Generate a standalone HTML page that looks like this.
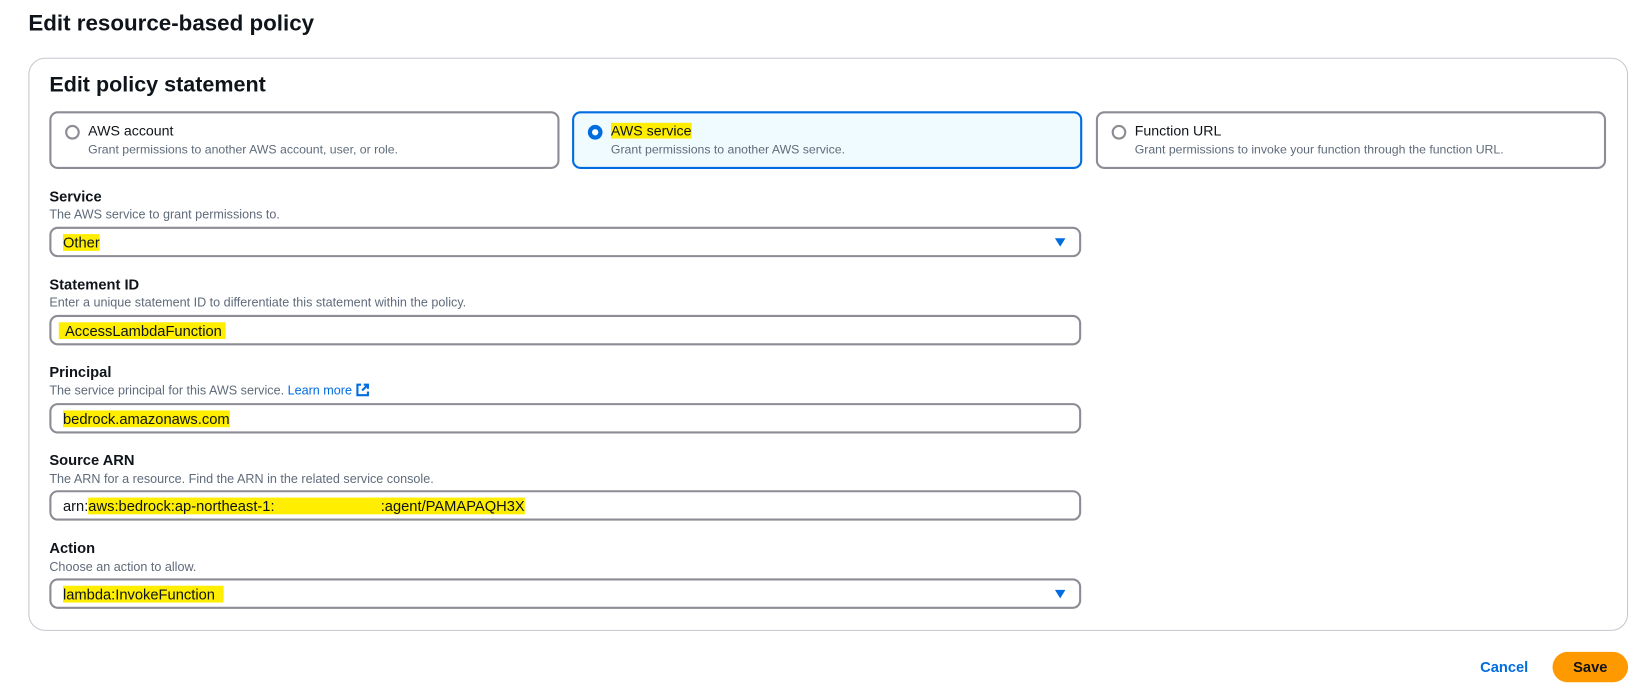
<!DOCTYPE html>
<html><head><meta charset="utf-8"><style>
*{box-sizing:border-box;margin:0;padding:0}
body{width:1646px;height:693px;background:#fff;font-family:"Liberation Sans",sans-serif;color:#16191f;overflow:hidden}
#w{position:relative;width:1568px;height:660px;transform:scale(1.0497);transform-origin:0 0}
.abs{position:absolute}
h1{position:absolute;left:27px;top:10px;font-size:21.3px;font-weight:bold;color:#0f141a}
.card{position:absolute;left:27px;top:55px;width:1524px;height:546px;border:1px solid #c6c6cd;border-radius:16px}
h2{position:absolute;left:47px;top:69px;font-size:20.5px;font-weight:bold;color:#0f141a}
.tile{position:absolute;top:106px;height:55px;width:486px;border:2px solid #8c8c94;border-radius:8px;background:#fff}
.tile.sel{border-color:#006ce0;background:#f0fbff}
.radio{position:absolute;left:13px;top:11px;width:14px;height:14px;border:2px solid #8c8c94;border-radius:50%;background:#fff}
.tile.sel .radio{border:4px solid #006ce0}
.tt{position:absolute;left:35px;top:9px;font-size:13.5px;color:#0f141a}
.td{position:absolute;left:35px;top:28px;font-size:11.7px;color:#5f6b7a}
.lbl{position:absolute;left:47px;font-size:14px;font-weight:bold;color:#0f141a}
.desc{position:absolute;left:47px;font-size:12px;color:#5f6b7a}
.inp{position:absolute;left:47px;width:983px;height:29px;border:2px solid #8c8c94;border-radius:8px;background:#fff}
.val{position:absolute;left:11px;top:5px;font-size:14px;color:#0f141a}
.hl{background:#ffee00}
.arr{position:absolute;right:13px;top:9px;width:0;height:0;border-left:5px solid transparent;border-right:5px solid transparent;border-top:8px solid #006ce0}
a{color:#006ce0;text-decoration:none}
</style></head><body><div id="w">
<h1>Edit resource-based policy</h1>
<div class="card"></div>
<h2>Edit policy statement</h2>
<div class="tile" style="left:47px"><div class="radio"></div><div class="tt">AWS account</div><div class="td">Grant permissions to another AWS account, user, or role.</div></div>
<div class="tile sel" style="left:545px"><div class="radio"></div><div class="tt"><span class="hl">AWS service</span></div><div class="td">Grant permissions to another AWS service.</div></div>
<div class="tile" style="left:1044px"><div class="radio"></div><div class="tt">Function URL</div><div class="td">Grant permissions to invoke your function through the function URL.</div></div>

<div class="lbl" style="top:179px">Service</div>
<div class="desc" style="top:197px">The AWS service to grant permissions to.</div>
<div class="inp" style="top:216px"><div class="val"><span class="hl">Other</span></div><div class="arr"></div></div>

<div class="lbl" style="top:263px">Statement ID</div>
<div class="desc" style="top:281px">Enter a unique statement ID to differentiate this statement within the policy.</div>
<div class="inp" style="top:300px"><div class="val"><span class="hl" style="padding:0 4px 0 2px;margin-left:-4px">&nbsp;AccessLambdaFunction</span></div></div>

<div class="lbl" style="top:346px">Principal</div>
<div class="desc" style="top:365px">The service principal for this AWS service. <a>Learn more</a> <svg width="13" height="13" viewBox="0 0 13 13" style="vertical-align:-2px"><path d="M5 1.5H1.5v10h10V8" fill="none" stroke="#006ce0" stroke-width="2"/><path d="M7.5 1.5h4v4M11.5 1.5L6 7" fill="none" stroke="#006ce0" stroke-width="2"/></svg></div>
<div class="inp" style="top:384px"><div class="val"><span class="hl">bedrock.amazonaws.com</span></div></div>

<div class="lbl" style="top:430px">Source ARN</div>
<div class="desc" style="top:449px">The ARN for a resource. Find the ARN in the related service console.</div>
<div class="inp" style="top:467px"><div class="val">arn:<span class="hl">aws:bedrock:ap-northeast-1:&nbsp;&nbsp;&nbsp;&nbsp;&nbsp;&nbsp;&nbsp;&nbsp;&nbsp;&nbsp;&nbsp;&nbsp;&nbsp;&nbsp;&nbsp;&nbsp;&nbsp;&nbsp;&nbsp;&nbsp;&nbsp;&nbsp;&nbsp;&nbsp;&nbsp;&nbsp;:agent/PAMAPAQH3X</span></div></div>

<div class="lbl" style="top:514px">Action</div>
<div class="desc" style="top:533px">Choose an action to allow.</div>
<div class="inp" style="top:551px"><div class="val"><span class="hl">lambda:InvokeFunction&nbsp;&nbsp;</span></div><div class="arr"></div></div>

<div class="abs" style="left:1410px;top:627px;font-size:14px;font-weight:bold;color:#006ce0">Cancel</div>
<div class="abs" style="left:1479px;top:621px;width:72px;height:29px;border-radius:15px;background:#ff9900;font-size:14px;font-weight:bold;color:#0f141a;text-align:center;line-height:29px">Save</div>
</div></body></html>
